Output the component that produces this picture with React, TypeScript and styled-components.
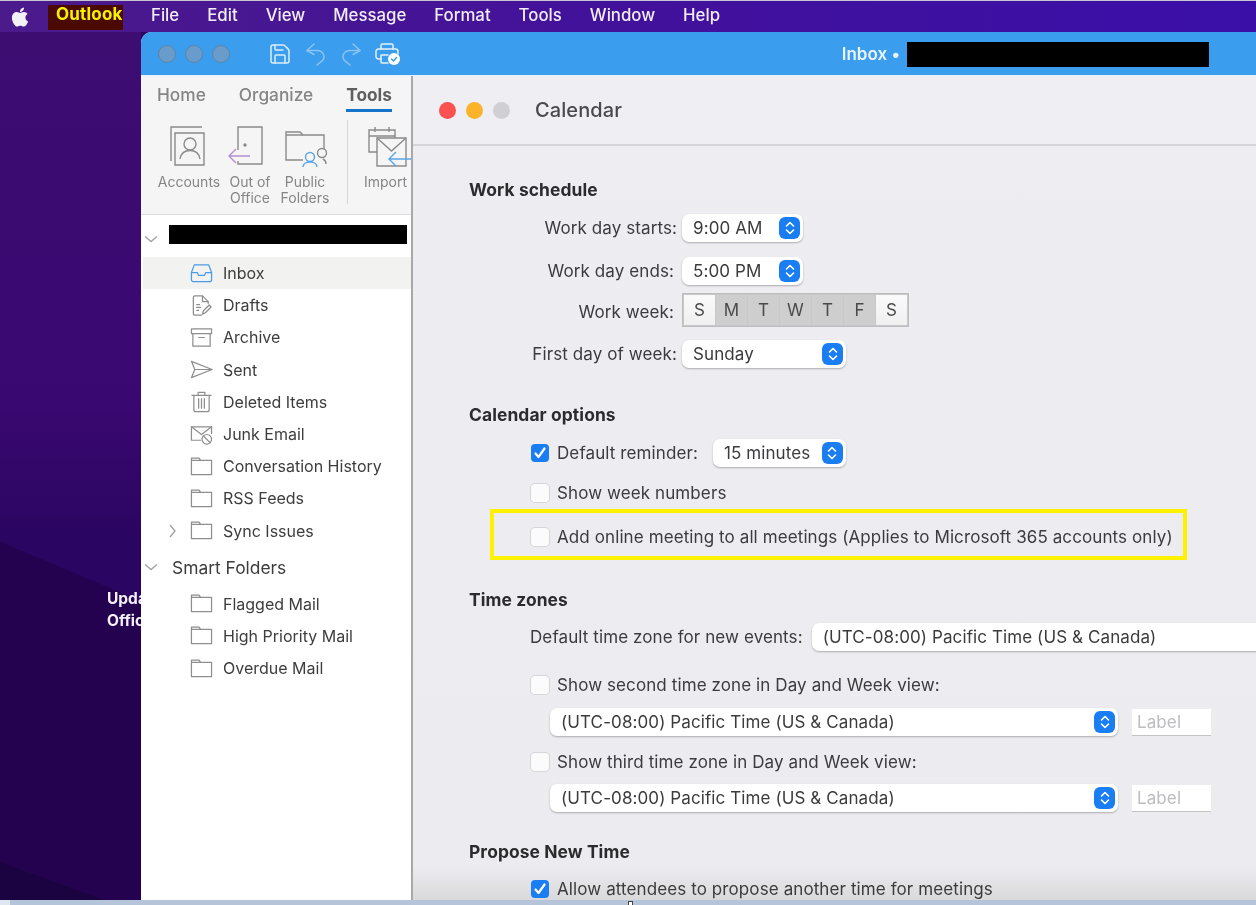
import styled, { createGlobalStyle } from "styled-components";
import { FaApple } from "react-icons/fa";
import { Save } from "lucide-react";

const FONT = `Inter, "Liberation Sans", sans-serif`;

const GlobalStyle = createGlobalStyle`
  html, body {
    margin: 0;
    padding: 0;
    background: #2a0260;
  }
  * { box-sizing: border-box; }
`;

const menuItems = ["File", "Edit", "View", "Message", "Format", "Tools", "Window", "Help"];

const FolderIcon = () => (
  <NavSvg viewBox="0 0 24 24">
    <path d="M1.5 5.5V3.2h8l1.6 2.3h11.4v15H1.5v-15h9.6" />
  </NavSvg>
);

const InboxIcon = () => (
  <NavSvg viewBox="0 0 24 24" $color="#4a9be8">
    <path d="M4.5 3h15l3 8v7.5a2 2 0 0 1-2 2h-17a2 2 0 0 1-2-2V11z" />
    <path d="M1.5 11h6l1.5 3h6l1.5-3h6" />
  </NavSvg>
);

const DraftsIcon = () => (
  <NavSvg viewBox="0 0 24 24">
    <path d="M12 22H5a1.5 1.5 0 0 1-1.5-1.5v-17A1.500 1.500 0 0 1 5 2h8l6 6v2" />
    <path d="M13 2v6h6" />
    <path d="M7 11h3M7 14h4M7 17h2" />
    <path d="M13 21l1-3.500 6-6 2 2-6 6z" />
  </NavSvg>
);

const ArchiveIcon = () => (
  <NavSvg viewBox="0 0 24 24">
    <path d="M1.500 3h21v5h-21z" />
    <path d="M3 8v13h18V8" />
    <path d="M9 12h6" />
  </NavSvg>
);

const SentIcon = () => (
  <NavSvg viewBox="0 0 24 24">
    <path d="M1.500 3.500L23 12 1.500 20.500 5 12z" />
    <path d="M5 12h18" />
  </NavSvg>
);

const TrashIcon = () => (
  <NavSvg viewBox="0 0 24 24">
    <path d="M2 5.500h20" />
    <path d="M8.500 5.500V2.500h7v3" />
    <path d="M4 5.500v15a2 2 0 0 0 2 2h12a2 2 0 0 0 2-2v-15" />
    <path d="M9 9v10M12 9v10M15 9v10" />
  </NavSvg>
);

const JunkIcon = () => (
  <NavSvg viewBox="0 0 24 24">
    <path d="M11 18H1.500V4h21v7" />
    <path d="M1.500 4L12 12l10.500-8" />
    <circle cx="17.500" cy="17" r="5" />
    <path d="M14 13.500l7 7" />
  </NavSvg>
);

const CheckMark = () => (
  <svg width="18" height="18" viewBox="0 0 18 18" fill="none">
    <path d="M4.500 9.500l3 3.500 6-8.500" stroke="#fff" strokeWidth="2.200" strokeLinecap="round" strokeLinejoin="round" />
  </svg>
);

const StepperGlyph = () => (
  <svg width="10" height="16" viewBox="0 0 10 16" fill="none">
    <path d="M1.500 6l3.500-3.500L8.500 6M1.500 10L5 13.500 8.500 10" stroke="#fff" strokeWidth="1.600" strokeLinecap="round" strokeLinejoin="round" />
  </svg>
);

const Select = ({ value, width }: { value: string; width: number }) => (
  <SelectBox $width={width}>
    <span>{value}</span>
    <Stepper><StepperGlyph /></Stepper>
  </SelectBox>
);

const Check = ({ on }: { on?: boolean }) => <CheckBox $on={on}>{on && <CheckMark />}</CheckBox>;

const navTop = [
  { name: "Inbox", icon: <InboxIcon />, active: true },
  { name: "Drafts", icon: <DraftsIcon /> },
  { name: "Archive", icon: <ArchiveIcon /> },
  { name: "Sent", icon: <SentIcon /> },
  { name: "Deleted Items", icon: <TrashIcon /> },
  { name: "Junk Email", icon: <JunkIcon /> },
  { name: "Conversation History", icon: <FolderIcon /> },
  { name: "RSS Feeds", icon: <FolderIcon /> },
  { name: "Sync Issues", icon: <FolderIcon />, caret: true },
];

const smartFolders = ["Flagged Mail", "High Priority Mail", "Overdue Mail"];
const weekDays = [
  { d: "S", on: false },
  { d: "M", on: true },
  { d: "T", on: true },
  { d: "W", on: true },
  { d: "T", on: true },
  { d: "F", on: true },
  { d: "S", on: false },
];
const PACIFIC = "(UTC-08:00) Pacific Time (US & Canada)";

export default function App() {
  return (
    <>
      <GlobalStyle />
      <Page>
        <MenuBar>
          <AppleSlot><FaApple size={22} color="#f4f0f8" /></AppleSlot>
          <AppName>Outlook</AppName>
          <MenuList>
            {menuItems.map((m) => <MenuItem key={m}>{m}</MenuItem>)}
          </MenuList>
        </MenuBar>

        <Desktop>
          <Gutter>
            <DesktopLabel>Update<br />Office</DesktopLabel>
          </Gutter>
          <Window>
            <TitleBar>
              <Lights>
                <Light /><Light /><Light />
              </Lights>
              <QuickTools>
                <Save size={24} strokeWidth={1.5} color="#dcedfc" />
                <HistoryIcon viewBox="0 0 22 24">
                  <path d="M9 2L2 8.500l7 4" />
                  <path d="M2 8.500h10c6 0 9 6 5.500 10L12 23" />
                </HistoryIcon>
                <HistoryIcon viewBox="0 0 22 24">
                  <path d="M13 2l7 6.500-7 4" />
                  <path d="M20 8.500H10c-6 0-9 6-5.500 10L10 23" />
                </HistoryIcon>
                <PrintIcon viewBox="0 0 26 24">
                  <path d="M6 7V3.500A1.500 1.500 0 0 1 7.500 2h9A1.500 1.500 0 0 1 18 3.500V7" />
                  <path d="M6 17H3.500A2.500 2.500 0 0 1 1 14.500v-5A2.500 2.500 0 0 1 3.500 7h17A2.500 2.500 0 0 1 23 9.500V12" />
                  <path d="M6 13h7M6 13v7a1 1 0 0 0 1 1h6" />
                  <circle cx="19" cy="17" r="6" fill="#fff" stroke="none" />
                  <path d="M16.500 17l2 2 3-3.500" stroke="#3b9ded" strokeWidth="1.500" />
                </PrintIcon>
              </QuickTools>
              <WindowTitle>
                <span>Inbox •</span>
                <Redaction $w={302} $h={25} />
              </WindowTitle>
            </TitleBar>

            <WindowBody>
              <Sidebar>
                <Ribbon>
                  <Tabs>
                    <Tab>Home</Tab>
                    <Tab>Organize</Tab>
                    <Tab $active>Tools</Tab>
                  </Tabs>
                  <RibbonRow>
                    <RibbonItem $w={64}>
                      <RibbonSvg viewBox="0 0 38 40" $w={38} $h={40}>
                        <path d="M1 35V1h31" />
                        <path d="M5 7h29v32H5z" />
                        <circle cx="20" cy="18" r="6" />
                        <path d="M10 33c1-6 5-8.500 10-8.500s9 2.500 10 8.500" />
                      </RibbonSvg>
                      <RibbonLabel>Accounts</RibbonLabel>
                    </RibbonItem>
                    <RibbonItem $w={50} $ml={4}>
                      <RibbonSvg viewBox="0 0 44 40" $w={44} $h={40}>
                        <path d="M10 24V1h24v37H10v-3" />
                        <circle cx="17" cy="19" r="1" fill="#777" />
                        <path d="M22 30H1M8 23l-7 7 7 7" stroke="#b48fd0" />
                      </RibbonSvg>
                      <RibbonLabel>Out of Office</RibbonLabel>
                    </RibbonItem>
                    <RibbonItem $w={50} $ml={5}>
                      <RibbonSvg viewBox="0 0 44 40" $w={44} $h={40}>
                        <path d="M20 34H3V6h14l3 3h21v14" />
                        <path d="M3 9h17" />
                        <circle cx="39" cy="27" r="4.500" />
                        <path d="M43 38c0-2-1-4-3-5" />
                        <circle cx="27" cy="31" r="4.500" stroke="#58a6e8" />
                        <path d="M20 41c0-3 3-5 7-5s7 2 7 5" stroke="#58a6e8" />
                      </RibbonSvg>
                      <RibbonLabel>Public Folders</RibbonLabel>
                    </RibbonItem>
                    <RibbonDivider />
                    <ImportItem>
                      <RibbonSvg viewBox="0 0 44 40" $w={44} $h={40}>
                        <path d="M9 26H1V4h26v8M1 10h26M7 1v5M21 1v5" />
                        <path d="M9 12h29v28H9z" />
                        <path d="M9 12l14.500 13L38 12" />
                        <path d="M44 33H21M28 26l-7 7 7 7" stroke="#58a6e8" />
                      </RibbonSvg>
                      <RibbonLabel>Import</RibbonLabel>
                    </ImportItem>
                  </RibbonRow>
                </Ribbon>

                <AccountRow>
                  <Chevron viewBox="0 0 14 14"><path d="M1 4.500l6 5 6-5" /></Chevron>
                  <Redaction $w={238} $h={19} />
                </AccountRow>

                <NavList>
                  {navTop.map((n) => (
                    <NavRow key={n.name} $active={n.active}>
                      {n.caret && <Caret viewBox="0 0 14 14"><path d="M4 1l5 6-5 6" /></Caret>}
                      {n.icon}
                      <NavText>{n.name}</NavText>
                    </NavRow>
                  ))}
                </NavList>

                <SmartHeader>
                  <Chevron viewBox="0 0 14 14"><path d="M1 4.500l6 5 6-5" /></Chevron>
                  <span>Smart Folders</span>
                </SmartHeader>
                <NavList>
                  {smartFolders.map((n) => (
                    <NavRow key={n}>
                      <FolderIcon />
                      <NavText>{n}</NavText>
                    </NavRow>
                  ))}
                </NavList>
              </Sidebar>

              <Prefs>
                <PrefsHeader>
                  <PrefLights>
                    <PrefLight $c="#fb5150" />
                    <PrefLight $c="#fbb32b" />
                    <PrefLight $c="#d0cfd3" />
                  </PrefLights>
                  <PrefsTitle>Calendar</PrefsTitle>
                </PrefsHeader>

                <PrefsContent>
                  <SectionTitle $mt={34}>Work schedule</SectionTitle>
                  <FieldRow $mt={14}>
                    <FieldLabel>Work day starts:</FieldLabel>
                    <Select value="9:00 AM" width={121} />
                  </FieldRow>
                  <FieldRow $mt={15}>
                    <FieldLabel $end={3}>Work day ends:</FieldLabel>
                    <Select value="5:00 PM" width={121} />
                  </FieldRow>
                  <FieldRow $mt={8}>
                    <FieldLabel $end={3} $drop={2}>Work week:</FieldLabel>
                    <WeekStrip>
                      {weekDays.map((w, i) => <DayCell key={i} $on={w.on}>{w.d}</DayCell>)}
                    </WeekStrip>
                  </FieldRow>
                  <FieldRow $mt={13}>
                    <FieldLabel $end={-2}>First day of week:</FieldLabel>
                    <Select value="Sunday" width={164} />
                  </FieldRow>

                  <SectionTitle $mt={37}>Calendar options</SectionTitle>
                  <CheckRow $mt={14}>
                    <Check on />
                    <CheckLabel>Default reminder:</CheckLabel>
                    <ReminderSlot><Select value="15 minutes" width={133} /></ReminderSlot>
                  </CheckRow>
                  <CheckRow $mt={12}>
                    <Check />
                    <CheckLabel>Show week numbers</CheckLabel>
                  </CheckRow>
                  <Highlight>
                    <Check />
                    <CheckLabel>Add online meeting to all meetings (Applies to Microsoft 365 accounts only)</CheckLabel>
                  </Highlight>

                  <SectionTitle $mt={30}>Time zones</SectionTitle>
                  <ZoneRow $mt={13}>
                    <span>Default time zone for new events:</span>
                    <PlainSelect>{PACIFIC}</PlainSelect>
                  </ZoneRow>
                  <CheckRow $mt={20}>
                    <Check />
                    <CheckLabel>Show second time zone in Day and Week view:</CheckLabel>
                  </CheckRow>
                  <ExtraZone $mt={9}>
                    <Select value={PACIFIC} width={568} />
                    <LabelInput>Label</LabelInput>
                  </ExtraZone>
                  <CheckRow $mt={12}>
                    <Check />
                    <CheckLabel>Show third time zone in Day and Week view:</CheckLabel>
                  </CheckRow>
                  <ExtraZone $mt={8}>
                    <Select value={PACIFIC} width={568} />
                    <LabelInput>Label</LabelInput>
                  </ExtraZone>

                  <SectionTitle $mt={30}>Propose New Time</SectionTitle>
                  <CheckRow $mt={13}>
                    <Check on />
                    <CheckLabel>Allow attendees to propose another time for meetings</CheckLabel>
                  </CheckRow>
                </PrefsContent>
              </Prefs>
            </WindowBody>
          </Window>
        </Desktop>
        <BottomStrip><Notch /></BottomStrip>
      </Page>
    </>
  );
}

const Page = styled.div`
  width: 1256px;
  height: 905px;
  display: flex;
  flex-direction: column;
  overflow: hidden;
  font-family: ${FONT};
  filter: blur(0.45px);
`;

const MenuBar = styled.div`
  height: 32px;
  flex-shrink: 0;
  display: flex;
  align-items: center;
  border-top: 1px solid #c9c6d4;
  background: linear-gradient(90deg, #4b1a8b 0%, #43129a 45%, #3a0fa8 100%);
  color: #f1edf7;
  font-size: 16.800px;
  font-weight: 500;
`;

const AppleSlot = styled.div`
  width: 48px;
  padding-left: 9px;
  display: flex;
  align-items: center;
`;

const AppName = styled.div`
  width: 75px;
  height: 25px;
  margin-top: 2px;
  background: #4a0a02;
  color: #f6f100;
  font-size: 17px;
  font-weight: 700;
  letter-spacing: 0.2px;
  line-height: 19px;
  padding-left: 8px;
`;

const MenuList = styled.div`
  display: flex;
  gap: 28px;
  margin-left: 28px;
  margin-top: -4px;
`;

const MenuItem = styled.span``;

const Desktop = styled.div`
  flex: 1;
  min-height: 0;
  display: flex;
  background: #2c0563;
`;

const Gutter = styled.div`
  width: 141px;
  flex-shrink: 0;
  overflow: hidden;
  padding: 556px 0 0 107px;
  background:
    linear-gradient(200deg, transparent 95.800%, #1b0342 95.900%),
    linear-gradient(202.800deg, transparent 61.300%, #250250 61.400%),
    linear-gradient(180deg, #3d0d72 0%, #3a0871 42%, #2b0562 58%);
`;

const DesktopLabel = styled.div`
  color: #f4f1fa;
  font-size: 15.500px;
  font-weight: 700;
  line-height: 22px;
  white-space: nowrap;
`;

const Window = styled.div`
  flex: 1;
  min-width: 0;
  display: flex;
  flex-direction: column;
  border-top-left-radius: 11px;
  overflow: hidden;
  background: #fff;
`;

const TitleBar = styled.div`
  height: 44px;
  flex-shrink: 0;
  display: flex;
  align-items: center;
  background: #3b9ded;
  border-bottom: 1px solid #e6f1fb;
`;

const Lights = styled.div`
  display: flex;
  gap: 9px;
  margin-left: 17px;
`;

const Light = styled.span`
  width: 18px;
  height: 18px;
  border-radius: 50%;
  background: #6a9ccb;
  border: 1px solid #5b84a8;
`;

const QuickTools = styled.div`
  display: flex;
  align-items: center;
  gap: 13px;
  margin-left: 38px;
`;

const HistoryIcon = styled.svg`
  width: 22px;
  height: 24px;
  fill: none;
  stroke: #8cc3f2;
  stroke-width: 1.500;
  stroke-linecap: round;
  stroke-linejoin: round;
`;

const PrintIcon = styled.svg`
  width: 26px;
  height: 24px;
  fill: none;
  stroke: #e4f1fd;
  stroke-width: 1.500;
  stroke-linecap: round;
  stroke-linejoin: round;
`;

const WindowTitle = styled.div`
  margin-left: auto;
  margin-right: 47px;
  padding-top: 1px;
  display: flex;
  align-items: center;
  gap: 7px;
  color: #e9f4fd;
  font-size: 17px;
  font-weight: 600;
`;

const Redaction = styled.div<{ $w: number; $h: number }>`
  width: ${({ $w }) => $w}px;
  height: ${({ $h }) => $h}px;
  background: #000;
`;

const WindowBody = styled.div`
  flex: 1;
  min-height: 0;
  display: flex;
`;

const Sidebar = styled.aside`
  width: 270px;
  flex-shrink: 0;
  overflow: hidden;
  background: #fff;
  color: #3d3d3d;
  font-size: 16px;
`;

const Ribbon = styled.div`
  height: 139px;
  background: #f5f5f5;
  border-bottom: 1px solid #dcdcdc;
  padding: 9px 0 0 16px;
`;

const Tabs = styled.div`
  display: flex;
  gap: 33px;
`;

const Tab = styled.div<{ $active?: boolean }>`
  height: 27px;
  line-height: 20px;
  font-size: 17.300px;
  font-weight: ${({ $active }) => ($active ? 700 : 500)};
  color: ${({ $active }) => ($active ? "#5f5f5f" : "#858585")};
  border-bottom: ${({ $active }) => ($active ? "3px solid #1374c9" : "none")};
`;

const RibbonRow = styled.div`
  display: flex;
  margin-top: 14px;
`;

const RibbonItem = styled.div<{ $w: number; $ml?: number }>`
  width: ${({ $w }) => $w}px;
  flex-shrink: 0;
  margin-left: ${({ $ml }) => $ml ?? 0}px;
  display: flex;
  flex-direction: column;
  align-items: center;
`;

const ImportItem = styled.div`
  width: 50px;
  margin-left: 16px;
  display: flex;
  flex-direction: column;
  align-items: flex-start;
  flex-shrink: 0;

  svg {
    margin-left: 4px;
  }
`;

const RibbonSvg = styled.svg<{ $w: number; $h: number }>`
  width: ${({ $w }) => $w}px;
  height: ${({ $h }) => $h}px;
  flex-shrink: 0;
  fill: none;
  overflow: visible;
  stroke: #8a8a8a;
  stroke-width: 1.400;
`;

const RibbonLabel = styled.div`
  margin-top: 8px;
  font-size: 14px;
  line-height: 16px;
  color: #868686;
  text-align: center;
`;

const RibbonDivider = styled.div`
  width: 1px;
  height: 84px;
  margin-left: 17px;
  margin-top: -6px;
  background: #d5d5d5;
  flex-shrink: 0;
`;

const AccountRow = styled.div`
  height: 42px;
  display: flex;
  align-items: center;
  padding: 0 0 3px 3px;
  gap: 11px;

  svg {
    margin-top: 9px;
  }
`;

const Chevron = styled.svg`
  width: 14px;
  height: 14px;
  flex-shrink: 0;
  fill: none;
  stroke: #a3a3a3;
  stroke-width: 1.400;
`;

const Caret = styled.svg`
  position: absolute;
  left: 23px;
  width: 14px;
  height: 14px;
  fill: none;
  stroke: #a3a3a3;
  stroke-width: 1.400;
`;

const NavList = styled.div`
  display: flex;
  flex-direction: column;
`;

const NavRow = styled.div<{ $active?: boolean }>`
  position: relative;
  height: 32.200px;
  margin-left: 2px;
  display: flex;
  align-items: center;
  padding-left: 47px;
  background: ${({ $active }) => ($active ? "#f2f2f1" : "transparent")};
`;

const NavSvg = styled.svg<{ $color?: string }>`
  width: 23px;
  height: 23px;
  flex-shrink: 0;
  fill: none;
  stroke: ${({ $color }) => $color ?? "#8e8e8e"};
  stroke-width: 1.300;
  stroke-linejoin: round;
  stroke-linecap: round;
`;

const NavText = styled.span`
  margin-left: 10px;
  white-space: nowrap;
`;

const SmartHeader = styled.div`
  height: 41px;
  display: flex;
  align-items: center;
  gap: 14px;
  padding: 0 0 0 3px;
  font-size: 17.400px;
`;

const Prefs = styled.section`
  flex: 1;
  min-width: 0;
  overflow: hidden;
  display: flex;
  flex-direction: column;
  border-left: 2px solid #a8a8ac;
  background: linear-gradient(180deg, #eeedf2 0%, #ecebf0 96%, #d9d8da 100%);
  color: #3b3b3d;
  font-size: 17px;
  letter-spacing: 0.1px;
`;

const PrefsHeader = styled.header`
  height: 70px;
  flex-shrink: 0;
  display: flex;
  align-items: center;
  border-bottom: 2px solid #d5d4d9;
  background: #efeef3;
  padding-left: 26px;
`;

const PrefLights = styled.div`
  display: flex;
  gap: 10px;
`;

const PrefLight = styled.span<{ $c: string }>`
  width: 17px;
  height: 17px;
  border-radius: 50%;
  background: ${({ $c }) => $c};
`;

const PrefsTitle = styled.h1`
  margin: 0 0 0 25px;
  font-size: 20px;
  font-weight: 500;
  color: #4a4a4c;
`;

const PrefsContent = styled.div`
  padding-left: 56px;
`;

const SectionTitle = styled.h2<{ $mt: number }>`
  margin: ${({ $mt }) => $mt}px 0 0;
  height: 20px;
  line-height: 20px;
  font-size: 17.400px;
  font-weight: 700;
  color: #2b2b2d;
`;

const FieldRow = styled.div<{ $mt: number }>`
  margin-top: ${({ $mt }) => $mt}px;
  display: flex;
  align-items: center;
  gap: 5px;
`;

const FieldLabel = styled.span<{ $end?: number; $drop?: number }>`
  width: 208px;
  text-align: right;
  padding-right: ${({ $end }) => $end ?? 0}px;
  white-space: nowrap;
  transform: translateY(${({ $drop }) => $drop ?? 0}px);
`;

const SelectBox = styled.div<{ $width: number }>`
  width: ${({ $width }) => $width}px;
  height: 28px;
  flex-shrink: 0;
  display: flex;
  align-items: center;
  justify-content: space-between;
  padding: 0 3px 0 11px;
  background: #fff;
  border-radius: 7px;
  box-shadow: 0 1px 2px rgba(0, 0, 0, 0.28);
  color: #3b3b3d;
  white-space: nowrap;
`;

const Stepper = styled.span`
  width: 21px;
  height: 22px;
  display: flex;
  align-items: center;
  justify-content: center;
  border-radius: 6px;
  background: #1a7ef2;
`;

const WeekStrip = styled.div`
  display: flex;
  height: 34px;
  padding: 1px;
  background: #c8c8ca;
  gap: 1px;
  border: 1px solid #bdbdbf;
`;

const DayCell = styled.span<{ $on: boolean }>`
  width: 31px;
  display: flex;
  align-items: center;
  justify-content: center;
  color: #4a4a4a;
  background: ${({ $on }) => ($on ? "#cfcecf" : "linear-gradient(180deg, #fafafa, #f0f0f0)")};
`;

const CheckRow = styled.div<{ $mt: number }>`
  margin-top: ${({ $mt }) => $mt}px;
  height: 28px;
  margin-left: 62px;
  display: flex;
  align-items: center;
  gap: 8px;
`;

const CheckBox = styled.span<{ $on?: boolean }>`
  width: 18px;
  height: 18px;
  flex-shrink: 0;
  display: flex;
  border-radius: 4px;
  background: ${({ $on }) => ($on ? "#1a7ef2" : "#fbfbfc")};
  box-shadow: ${({ $on }) => ($on ? "none" : "0 0 0 1px #d6d5da")};
`;

const CheckLabel = styled.span`
  white-space: nowrap;
`;

const ReminderSlot = styled.div`
  margin-left: 7px;
`;

const Highlight = styled.div`
  width: 697px;
  height: 51px;
  margin: 2px 0 0 21px;
  padding: 4px 0 0 37px;
  display: flex;
  align-items: center;
  gap: 8px;
  border: 4px solid #fff200;
`;

const ZoneRow = styled.div<{ $mt: number }>`
  margin: ${({ $mt }) => $mt}px 0 0 61px;
  display: flex;
  align-items: center;
  gap: 9px;
  white-space: nowrap;
`;

const PlainSelect = styled.div`
  width: 520px;
  height: 28px;
  flex-shrink: 0;
  padding-left: 11px;
  line-height: 28px;
  background: #fff;
  border-radius: 7px 0 0 7px;
  box-shadow: 0 1px 2px rgba(0, 0, 0, 0.28);
`;

const ExtraZone = styled.div<{ $mt: number }>`
  margin: ${({ $mt }) => $mt}px 0 0 81px;
  display: flex;
  align-items: center;
  gap: 14px;
`;

const LabelInput = styled.div`
  width: 79px;
  height: 27px;
  padding-left: 5px;
  line-height: 26px;
  background: #fff;
  color: #bdbdc0;
  border-bottom: 1px solid #c4c4c6;
`;

const BottomStrip = styled.div`
  position: relative;
  height: 5px;
  flex-shrink: 0;
  background: linear-gradient(90deg, #dfe7f0 10px, #b5c4d8 10px);
`;

const Notch = styled.span`
  position: absolute;
  left: 628px;
  top: 1px;
  width: 5px;
  height: 4px;
  background: #fff;
  border: 1px solid #444;
  border-bottom: none;
`;
